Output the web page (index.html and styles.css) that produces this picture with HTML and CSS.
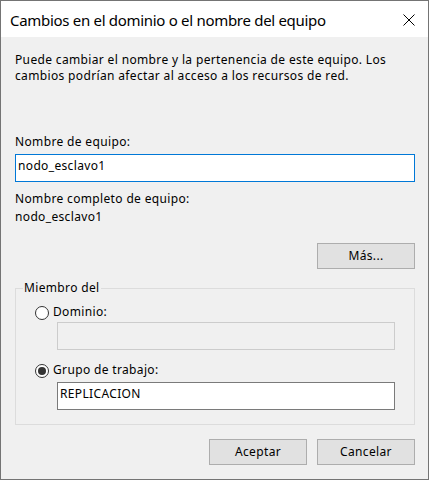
FILE: index.html
```html
<!DOCTYPE html>
<html lang="es">
<head>
    <meta charset="UTF-8">
    <meta name="viewport" content="width=device-width, initial-scale=1.0">
    <title>Cambios en el dominio o el nombre del equipo</title>
    <link rel="stylesheet" href="styles.css">
</head>
<body>
    <div class="window">
        <!-- Title bar -->
        <div class="titlebar">
            <span class="title">Cambios en el dominio o el nombre del equipo</span>
            <span class="close">
                <svg width="12" height="12" viewBox="0 0 12 12">
                    <path d="M0.5 0.5 L11.5 11.5 M11.5 0.5 L0.5 11.5" stroke="#000" stroke-width="1" fill="none"/>
                </svg>
            </span>
        </div>

        <div class="content">
            <p class="intro">Puede cambiar el nombre y la pertenencia de este equipo. Los cambios podrían afectar al acceso a los recursos de red.</p>

            <div class="label name-label">Nombre de equipo:</div>
            <div class="textbox focused">nodo_esclavo1</div>

            <div class="label full-label">Nombre completo de equipo:</div>
            <div class="label full-value">nodo_esclavo1</div>

            <div class="button-row more-row">
                <div class="button">Más...</div>
            </div>

            <!-- Member of -->
            <fieldset class="group">
                <legend>Miembro del</legend>

                <div class="radio-row">
                    <span class="radio"></span>
                    <span>Dominio:</span>
                </div>
                <div class="textbox disabled"></div>

                <div class="radio-row second">
                    <span class="radio checked"></span>
                    <span>Grupo de trabajo:</span>
                </div>
                <div class="textbox plain">REPLICACION</div>
            </fieldset>

            <div class="button-row footer">
                <div class="button">Aceptar</div>
                <div class="button">Cancelar</div>
            </div>
        </div>
    </div>
</body>
</html>
```

FILE: styles.css
```css
/* Page */
body {
    margin: 0;
    background-color: #ffffff;
    font-family: "Noto Sans", "Liberation Sans", sans-serif;
    font-size: 12px;
    line-height: 16px;
    letter-spacing: 0.35px;
    color: #000000;
}

/* Dialog frame */
.window {
    width: 427px;
    height: 478px;
    border: 1px solid #747474;
    background-color: #f0f0f0;
}

.titlebar {
    height: 36px;
    background-color: #ffffff;
    display: flex;
    align-items: center;
    justify-content: space-between;
    padding: 0 13px 0 9px;
}

.title {
    font-size: 15px;
    line-height: 20px;
    letter-spacing: -0.3px;
    padding-top: 1px;
}

.close {
    display: flex;
    padding-top: 1px;
}

.content {
    padding: 15px 13px 0 14px;
}

.intro {
    margin: 0;
}

.label {
    height: 16px;
}

.name-label {
    margin-top: 50px;
}

/* Text boxes */
.textbox {
    box-sizing: border-box;
    height: 28px;
    border: 1px solid #7a7a7a;
    background-color: #ffffff;
    padding: 3px 2px 0 2px;
}

.textbox.focused {
    margin-top: 4px;
    border-color: #0078d7;
}

.full-label {
    margin-top: 9px;
}

.full-value {
    margin-top: 2px;
}

/* Buttons */
.button-row {
    display: flex;
    justify-content: flex-end;
    gap: 10px;
}

.more-row {
    margin-top: 18px;
}

.button {
    box-sizing: border-box;
    width: 98px;
    height: 26px;
    border: 1px solid #adadad;
    background-color: #e1e1e1;
    text-align: center;
    line-height: 24px;
}

/* Group box */
.group {
    margin: 11px 0 0 0;
    padding: 0 0 14px 0;
    border: 1px solid #dcdcdc;
    min-width: 0;
}

.group legend {
    margin-left: 7px;
    padding: 0 1px;
    line-height: 16px;
}

.radio-row {
    display: flex;
    align-items: center;
    gap: 4px;
    margin: 8px 0 0 19px;
    height: 16px;
}

.radio-row.second {
    margin-top: 12px;
}

.radio {
    box-sizing: border-box;
    width: 14px;
    height: 14px;
    border: 1px solid #333333;
    border-radius: 50%;
    background-color: #ffffff;
    display: flex;
    align-items: center;
    justify-content: center;
    margin-top: 1px;
}

.radio.checked::after {
    content: "";
    width: 8px;
    height: 8px;
    border-radius: 50%;
    background-color: #333333;
}

.group .textbox {
    width: 338px;
    margin-left: 41px;
}

.textbox.disabled {
    margin-top: 2px;
    background-color: #f0f0f0;
    border-color: #cccccc;
}

.textbox.plain {
    margin-top: 4px;
}

.footer {
    margin-top: 14px;
}
```
